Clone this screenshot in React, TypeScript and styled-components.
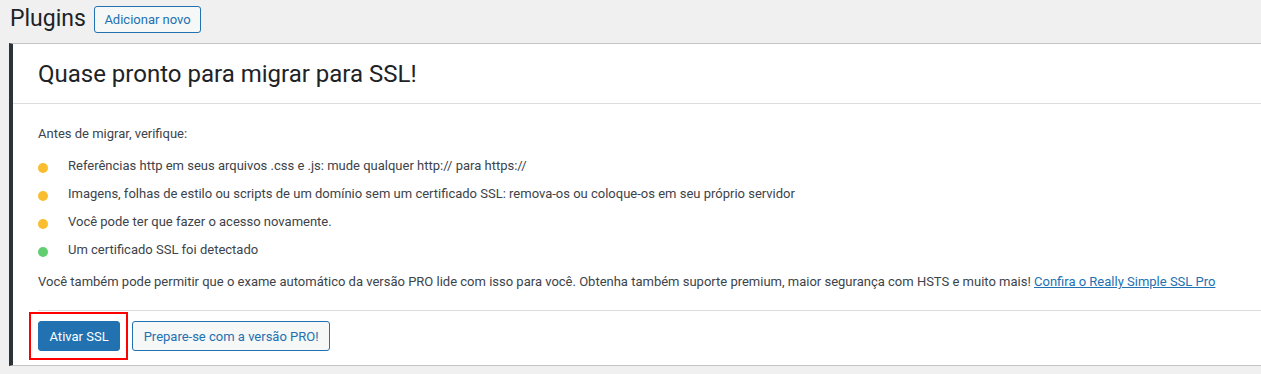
import React from "react";
import styled, { createGlobalStyle } from "styled-components";

const Global = createGlobalStyle`
  html, body { margin: 0; padding: 0; }
  body {
    background: #f0f0f1;
    font-family: Roboto, "Liberation Sans", Arial, sans-serif;
    color: #3c434a;
    font-size: 13px;
    overflow: hidden;
  }
`;

const TitleRow = styled.div`
  display: flex;
  align-items: center;
  gap: 8px;
  padding: 4px 0 0 10px;
  height: 30px;
  margin-bottom: 9px;
`;

const PageTitle = styled.h1`
  margin: 0;
  font-size: 23px;
  font-weight: 400;
  line-height: 30px;
  color: #1d2327;
`;

const Button = styled.a<{ $variant?: "primary" | "secondary" | "outline" }>`
  display: inline-flex;
  align-items: center;
  box-sizing: border-box;
  height: ${(p) => (p.$variant === "outline" ? "27px" : "30px")};
  padding: 0 ${(p) => (p.$variant === "outline" ? "9.5px" : "10.5px")};
  border: 1px solid #2271b1;
  border-radius: 3px;
  font-size: 13px;
  line-height: 1;
  text-decoration: none;
  white-space: nowrap;
  cursor: pointer;
  background: ${(p) => (p.$variant === "primary" ? "#2271b1" : "#f6f7f7")};
  color: ${(p) => (p.$variant === "primary" ? "#ffffff" : "#2271b1")};
`;

const Notice = styled.div`
  margin: 0 -10px 0 9px;
  background: #fff;
  border: 1px solid #c3c4c7;
  border-left: 4px solid #2c3338;
  box-shadow: 0 1px 1px rgba(0, 0, 0, 0.04);
`;

const NoticeHeader = styled.div`
  padding: 15px 25px 14px;
  border-bottom: 1px solid #dcdcde;
`;

const NoticeTitle = styled.h2`
  margin: 0;
  font-size: 24px;
  font-weight: 400;
  line-height: 30px;
  color: #1d2327;
`;

const NoticeBody = styled.div`
  padding-left: 25px;
`;

const Text = styled.p<{ $gap?: number }>`
  margin: ${(p) => p.$gap ?? 0}px 0 0;
  line-height: 20px;
`;

const Checklist = styled.ul`
  list-style: none;
  margin: 8px 0 0;
  padding: 0;
`;

const CheckItem = styled.li`
  display: flex;
  align-items: center;
  gap: 20px;
  height: 28px;
  line-height: 28px;
`;

const Dot = styled.span<{ $status: "warn" | "ok" }>`
  flex: none;
  width: 10px;
  height: 10px;
  margin-top: 3px;
  border-radius: 50%;
  background: ${(p) => (p.$status === "ok" ? "#61ce70" : "#f8be2e")};
`;

const Link = styled.a`
  color: #2271b1;
  text-decoration: underline;
`;

const Footer = styled.div`
  display: flex;
  gap: 12px;
  margin-top: 18px;
  padding: 10px 0 14px;
  border-top: 1px solid #dcdcde;
`;

const Highlight = styled.span`
  position: relative;
  display: inline-flex;
  &::after {
    content: "";
    position: absolute;
    left: -9px;
    top: -9px;
    right: -8px;
    bottom: -9px;
    border: 2px solid #ff0000;
    pointer-events: none;
  }
`;

const items: { status: "warn" | "ok"; text: string }[] = [
  { status: "warn", text: "Referências http em seus arquivos .css e .js: mude qualquer http:// para https://" },
  { status: "warn", text: "Imagens, folhas de estilo ou scripts de um domínio sem um certificado SSL: remova-os ou coloque-os em seu próprio servidor" },
  { status: "warn", text: "Você pode ter que fazer o acesso novamente." },
  { status: "ok", text: "Um certificado SSL foi detectado" },
];

export default function App() {
  return (
    <>
      <Global />
      <TitleRow>
        <PageTitle>Plugins</PageTitle>
        <Button $variant="outline">Adicionar novo</Button>
      </TitleRow>
      <Notice>
        <NoticeHeader>
          <NoticeTitle>Quase pronto para migrar para SSL!</NoticeTitle>
        </NoticeHeader>
        <NoticeBody>
          <Text $gap={20}>Antes de migrar, verifique:</Text>
          <Checklist>
            {items.map((it) => (
              <CheckItem key={it.text}>
                <Dot $status={it.status} />
                <span>{it.text}</span>
              </CheckItem>
            ))}
          </Checklist>
          <Text $gap={8}>
            Você também pode permitir que o exame automático da versão PRO lide com isso para você. Obtenha também suporte premium, maior segurança com HSTS e muito mais!{" "}
            <Link>Confira o Really Simple SSL Pro</Link>
          </Text>
          <Footer>
            <Highlight>
              <Button $variant="primary">Ativar SSL</Button>
            </Highlight>
            <Button $variant="secondary">Prepare-se com a versão PRO!</Button>
          </Footer>
        </NoticeBody>
      </Notice>
    </>
  );
}
